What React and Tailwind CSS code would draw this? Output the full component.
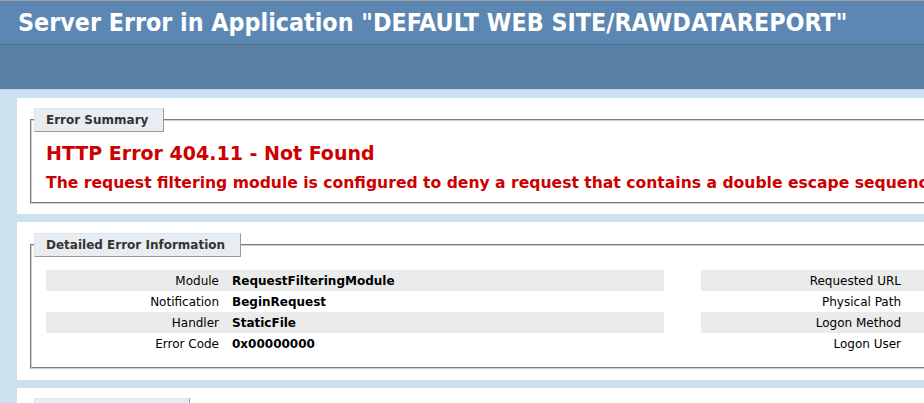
import React from 'react';

const leftRows = [
  ['Module', 'RequestFilteringModule'],
  ['Notification', 'BeginRequest'],
  ['Handler', 'StaticFile'],
  ['Error Code', '0x00000000'],
];

const rightRows = [
  ['Requested URL', 'http://localhost:80/RawDataReport/'],
  ['Physical Path', 'C:\\inetpub\\wwwroot\\RawDataReport\\'],
  ['Logon Method', 'Not yet determined'],
  ['Logon User', 'Not yet determined'],
];

function Legend({ children }) {
  return (
    <legend className="ml-[-12px] h-[24px] border border-t-[#dde3e8] border-l-[#dde3e8] border-r-[#9c9c9c] border-b-[#9c9c9c] bg-[#e8edf1] pt-[3px] pb-[3px] pl-[11px] pr-[15px] text-[12px] leading-[16px] font-bold text-[#333333]">
      {children}
    </legend>
  );
}

function DetailTable({ rows, labelWidth, labelPad }) {
  return (
    <div className="flex flex-col">
      {rows.map(([label, value], i) => (
        <div key={label} className={`flex h-[21px] items-center ${i % 2 === 0 ? 'bg-[#ebebeb]' : ''}`}>
          <div className={`${labelWidth} ${labelPad} shrink-0 text-right text-black`}>{label}</div>
          <div className="flex-1 pl-px font-bold text-black whitespace-nowrap">{value}</div>
        </div>
      ))}
    </div>
  );
}

export default function App() {
  return (
    <div className="h-[403px] w-[924px] overflow-hidden bg-[#CBE1EF] font-['DejaVu_Sans',Verdana,sans-serif] text-[12px] leading-[14px]">
      <div className="w-[1900px]">
        <div className="h-px bg-[#a0a0a0]" />
        <div className="h-[43px] bg-[#5C87B2] pl-[18px] pt-[7px]">
          <h1 className="font-['DejaVu_Sans_Condensed','DejaVu_Sans',sans-serif] [font-stretch:condensed] text-[24.8px] font-bold leading-[30px] text-white whitespace-nowrap">
            Server Error in Application "DEFAULT WEB SITE/RAWDATAREPORT"
          </h1>
        </div>
        <div className="h-[46px] border-t border-b border-t-[#4A6C8E] border-b-[#C1CFDD] bg-[#5A7FA5]" />

        <div className="pl-[17px]">
          <div className="mt-[8px] w-[1830px] bg-white pt-[10px] pb-[10px] pl-[13px]">
            <fieldset className="border-2 border-[#d0d0d0] [border-style:groove] px-[14px] pb-[8px]">
              <Legend>Error Summary</Legend>
              <h2 className="mt-[9px] text-[19px] font-bold leading-[24px] text-[#CC0000] whitespace-nowrap">
                HTTP Error 404.11 - Not Found
              </h2>
              <h3 className="mt-[7px] text-[15.6px] font-bold leading-[22px] text-[#CC0000] whitespace-nowrap">
                The request filtering module is configured to deny a request that contains a double escape sequence.
              </h3>
            </fieldset>
          </div>

          <div className="mt-[8px] w-[1830px] bg-white pt-[11px] pb-[11px] pl-[13px]">
            <fieldset className="border-2 border-[#d0d0d0] [border-style:groove] px-[14px] pb-[13px]">
              <Legend>Detailed Error Information</Legend>
              <div className="mt-[13px] flex">
                <div className="w-[618px]">
                  <DetailTable rows={leftRows} labelWidth="w-[185px]" labelPad="pr-[12px]" />
                </div>
                <div className="ml-[37px] w-[1100px]">
                  <DetailTable rows={rightRows} labelWidth="w-[222px]" labelPad="pr-[22px]" />
                </div>
              </div>
            </fieldset>
          </div>

          <div className="mt-[8px] w-[1830px] bg-white pt-[10px] pl-[13px]">
            <fieldset className="border-2 border-[#d0d0d0] [border-style:groove] px-[14px] pb-[10px]">
              <Legend>Most likely causes:</Legend>
              <div className="h-[60px]" />
            </fieldset>
          </div>
        </div>
      </div>
    </div>
  );
}
